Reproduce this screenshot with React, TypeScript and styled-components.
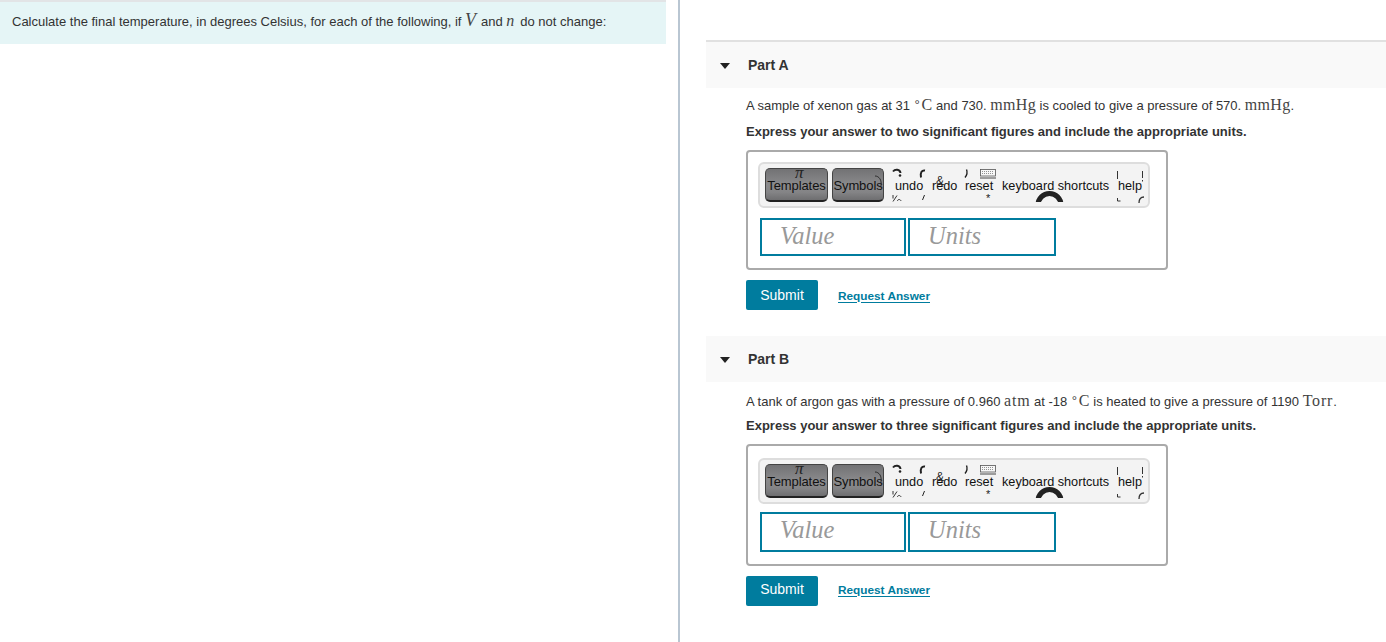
import React from "react";
import styled, { createGlobalStyle } from "styled-components";

const Global = createGlobalStyle`
  html, body { margin: 0; padding: 0; background: #fff; }
  body { font-family: "Liberation Sans", Arial, sans-serif; color: #333; overflow: hidden; }
`;
const Page = styled.div`
  display: flex;
  width: 1386px;
  height: 642px;
  overflow: hidden;
`;
const LeftPane = styled.div`
  box-sizing: border-box;
  width: 680px;
  flex: none;
  padding-right: 12px;
  border-right: 2px solid #b9c6d2;
`;
const Intro = styled.div`
  box-sizing: border-box;
  height: 44px;
  padding: 10px 0 0 12px;
  border-top: 2px solid #e2e4e6;
  background: #e5f5f6;
  font-size: 13px;
  line-height: 16px;
  color: #333;
  white-space: nowrap;
`;
const Math = styled.span<{ $size?: number; $track?: number }>`
  font-family: "Liberation Serif", "DejaVu Serif", serif;
  font-size: ${(p) => p.$size ?? 16}px;
  letter-spacing: ${(p) => p.$track ?? 0.3}px;
  color: #444;
`;
const MathItalic = styled(Math)<{ $after?: number }>`
  font-style: italic;
  margin-right: ${(p) => p.$after ?? 0}px;
`;
const Degree = styled.span`
  font-family: "Liberation Serif", serif;
  font-size: 12px;
  line-height: 0;
  margin: 0 2px 0 1px;
  position: relative;
  top: -2px;
`;
const RightPane = styled.div`
  flex: 1;
  padding: 40px 0 0 26px;
  min-width: 0;
`;
const PartHeader = styled.div<{ $top?: boolean }>`
  box-sizing: border-box;
  height: ${(p) => (p.$top ? 48 : 46)}px;
  display: flex;
  align-items: center;
  background: #f9f9f9;
  border-top: ${(p) => (p.$top ? "2px solid #e1e1e1" : "none")};
  font-size: 14px;
  font-weight: 700;
  color: #333;
`;
const Caret = styled.span`
  width: 0;
  height: 0;
  margin: 2px 18px 0 14px;
  border-left: 5.5px solid transparent;
  border-right: 5.5px solid transparent;
  border-top: 6px solid #222;
`;
const PartBody = styled.div<{ $pt: number; $bottom: number }>`
  padding: ${(p) => p.$pt}px 0 ${(p) => p.$bottom}px 40px;
  display: flex;
  flex-direction: column;
  align-items: flex-start;
`;
const Question = styled.p<{ $gap: number }>`
  margin: 0 0 ${(p) => p.$gap}px;
  height: 18px;
  font-size: 13px;
  line-height: 18px;
  color: #333;
  white-space: nowrap;
`;
const Instruction = styled.p`
  margin: 0;
  font-size: 13px;
  line-height: 16px;
  font-weight: 700;
  color: #333;
  white-space: nowrap;
`;
const AnswerBox = styled.div<{ $tall: boolean }>`
  box-sizing: border-box;
  width: 422px;
  margin-top: 10px;
  padding: ${(p) => (p.$tall ? 12 : 10)}px 10px 0 12px;
  height: ${(p) => (p.$tall ? 122 : 120)}px;
  border: 2px solid #aaa;
  border-radius: 4px;
`;
const Toolbar = styled.div`
  box-sizing: border-box;
  position: relative;
  width: 392px;
  height: 46px;
  margin-left: -2px;
  display: flex;
  align-items: center;
  padding-left: 5px;
  background: #f3f3f3;
  border: 2px solid #ddd;
  border-radius: 6px;
  overflow: hidden;
`;
const ToolGroup = styled.div`
  display: flex;
  gap: 4px;
`;
const TemplateButton = styled.div<{ $w: number }>`
  box-sizing: border-box;
  width: ${(p) => p.$w}px;
  height: 34px;
  line-height: 34px;
  text-align: center;
  font-size: 13px;
  letter-spacing: -0.1px;
  color: #111;
  white-space: nowrap;
  background: linear-gradient(#727274, #8a8a8c 50%, #848486 75%, #6e6e70);
  border: 1px solid #444;
  border-bottom: 2px solid #222;
  border-radius: 5px;
`;
const ToolLabel = styled.span<{ $left: number }>`
  position: absolute;
  left: ${(p) => p.$left}px;
  top: 14px;
  font-size: 12.7px;
  line-height: 16px;
  color: #111;
  white-space: nowrap;
`;
const Glyph = styled.span<{ $l: number; $t: number; $s?: number; $serif?: boolean }>`
  position: absolute;
  left: ${(p) => p.$l}px;
  top: ${(p) => p.$t}px;
  font-size: ${(p) => p.$s ?? 11}px;
  font-family: ${(p) => (p.$serif ? '"Liberation Serif", serif' : "inherit")};
  font-style: ${(p) => (p.$serif ? "italic" : "normal")};
  line-height: 1;
  color: #222;
`;
const Fragments = styled.svg`
  position: absolute;
  left: -2px;
  top: -2px;
  width: 392px;
  height: 46px;
  pointer-events: none;
`;
const InputRow = styled.div<{ $h: number; $mt: number }>`
  display: flex;
  gap: 2px;
  margin-top: ${(p) => p.$mt}px;
  height: ${(p) => p.$h}px;
`;
const UnitField = styled.div<{ $w: number; $tall: boolean }>`
  box-sizing: border-box;
  width: ${(p) => p.$w}px;
  height: 100%;
  display: flex;
  align-items: center;
  padding: 0 0 ${(p) => (p.$tall ? 4 : 2)}px 18px;
  border: 2px solid #007c9e;
  font-family: "Liberation Serif", serif;
  font-style: italic;
  font-size: 24.5px;
  color: #999;
`;
const Actions = styled.div`
  display: flex;
  align-items: center;
  gap: 20px;
  margin-top: 10px;
`;
const Submit = styled.div<{ $tall: boolean }>`
  width: 72px;
  height: 30px;
  border-radius: 2px;
  background: #007c9e;
  color: #fff;
  font-size: 14px;
  line-height: ${(p) => (p.$tall ? 26 : 30)}px;
  text-align: center;
`;
const RequestLink = styled.span<{ $tall: boolean }>`
  margin-top: ${(p) => (p.$tall ? -3 : 1)}px;
  font-size: 11.8px;
  font-weight: 700;
  color: #007c9e;
  text-decoration: underline;
  text-underline-offset: 2px;
  white-space: nowrap;
`;

const Toolbits = () => (
  <>
    <ToolLabel $left={135}>undo</ToolLabel>
    <ToolLabel $left={172}>redo</ToolLabel>
    <ToolLabel $left={205}>reset</ToolLabel>
    <ToolLabel $left={242}>keyboard shortcuts</ToolLabel>
    <ToolLabel $left={358}>help</ToolLabel>
    <Glyph $l={35} $t={0} $s={17} $serif>π</Glyph>
    <Glyph $l={176} $t={11} $s={12}>&amp;</Glyph>
    <Glyph $l={226} $t={29} $s={11}>*</Glyph>
    <Fragments viewBox="0 0 392 46">
      <path d="M135 9.5 C137 7 142 7 142.5 11" fill="none" stroke="#222" strokeWidth="2" />
      <circle cx="142" cy="13.5" r="1.3" fill="#222" />
      <path d="M167 8.5 C164 8 162 10 163 15.5" fill="none" stroke="#222" strokeWidth="2" />
      <path d="M208.5 7.5 C209.5 10 209 13 207 15.5" fill="none" stroke="#222" strokeWidth="1.4" />
      <rect x="222.5" y="7.5" width="15" height="6.5" fill="#f7f7f7" stroke="#555" strokeWidth="0.8" />
      <path d="M224 9.5h12M224 11.5h12" stroke="#777" strokeWidth="0.8" strokeDasharray="1 1" />
      <path d="M222 16h16" stroke="#333" strokeWidth="0.9" />
      <path d="M135 33v3.5M135 39.5l4-6M139.5 39c0-2 3-2 3.5 0" fill="none" stroke="#333" strokeWidth="1" />
      <path d="M166.5 33 L164.5 38" stroke="#222" strokeWidth="1" />
      <path d="M280 43 A 11.5 11.5 0 0 1 303 43" fill="none" stroke="#222" strokeWidth="5" />
      <rect x="275" y="40" width="34" height="6" fill="#f3f3f3" />
      <path d="M359.5 9v8" stroke="#333" />
      <path d="M384.5 9v7M384.5 18v1.5" stroke="#333" />
      <path d="M359.5 36v3h3" fill="none" stroke="#333" />
      <path d="M381 41c0-4 1.5-6 5-6" fill="none" stroke="#333" strokeWidth="1.3" />
      <path d="M117 14 C121 14 124 18 123 24" fill="none" stroke="#222" strokeWidth="0.9" />
    </Fragments>
  </>
);

const Answer = ({ tall }: { tall: boolean }) => (
  <AnswerBox $tall={tall}>
    <Toolbar>
      <ToolGroup>
        <TemplateButton $w={63}>Templates</TemplateButton>
        <TemplateButton $w={52}>Symbols</TemplateButton>
      </ToolGroup>
      <Toolbits />
    </Toolbar>
    <InputRow $h={tall ? 40 : 38} $mt={tall ? 8 : 10}>
      <UnitField $w={146} $tall={tall}>Value</UnitField>
      <UnitField $w={148} $tall={tall}>Units</UnitField>
    </InputRow>
  </AnswerBox>
);

const Footer = ({ tall }: { tall: boolean }) => (
  <Actions>
    <Submit $tall={tall}>Submit</Submit>
    <RequestLink $tall={tall}>Request Answer</RequestLink>
  </Actions>
);

export default function App() {
  return (
    <Page>
      <Global />
      <LeftPane>
        <Intro>
          Calculate the final temperature, in degrees Celsius, for each of the following, if{" "}
          <MathItalic $size={18} $after={1}>V</MathItalic> and <MathItalic $size={16} $after={2}>n</MathItalic> do not change:
        </Intro>
      </LeftPane>
      <RightPane>
        <PartHeader $top>
          <Caret />
          Part A
        </PartHeader>
        <PartBody $pt={8} $bottom={26}>
          <Question $gap={10}>
            A sample of xenon gas at 31 <Degree>°</Degree>
            <Math>C</Math> and 730. <Math>mmHg</Math> is cooled to give a pressure of 570. <Math>mmHg</Math>.
          </Question>
          <Instruction>Express your answer to two significant figures and include the appropriate units.</Instruction>
          <Answer tall={false} />
          <Footer tall={false} />
        </PartBody>
        <PartHeader>
          <Caret />
          Part B
        </PartHeader>
        <PartBody $pt={10} $bottom={0}>
          <Question $gap={8}>
            A tank of argon gas with a pressure of 0.960 <Math $track={0.8}>atm</Math> at -18 <Degree>°</Degree>
            <Math>C</Math> is heated to give a pressure of 1190 <Math $track={0.8}>Torr</Math>.
          </Question>
          <Instruction>Express your answer to three significant figures and include the appropriate units.</Instruction>
          <Answer tall />
          <Footer tall />
        </PartBody>
      </RightPane>
    </Page>
  );
}
